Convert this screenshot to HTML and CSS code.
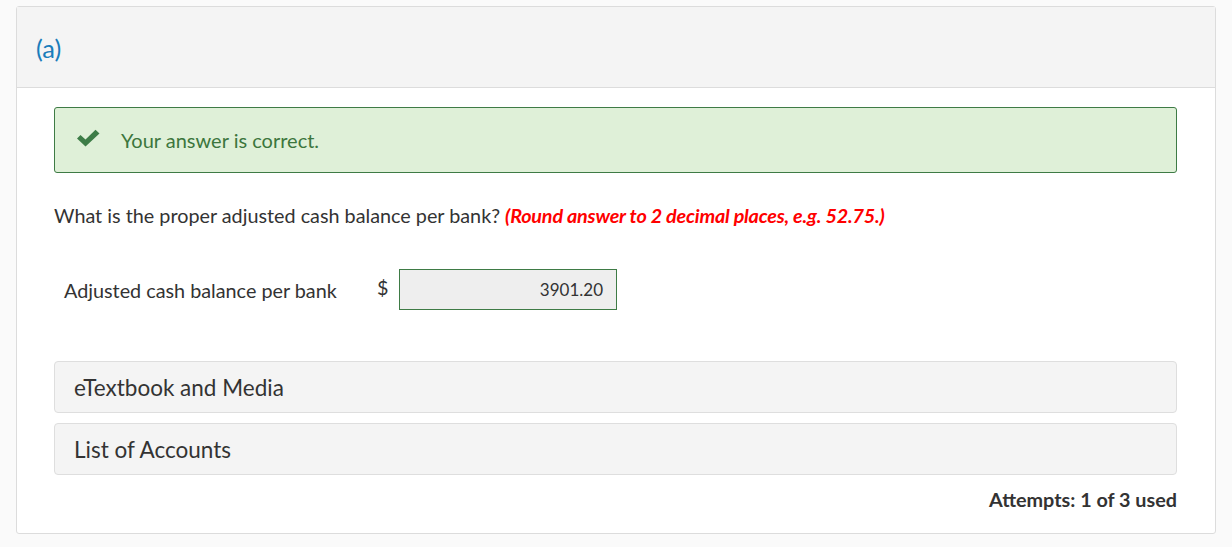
FILE: index.html
```html
<!DOCTYPE html>
<html>
<head>
<meta charset="utf-8">
<link rel="stylesheet" href="styles.css">
</head>
<body>
<div class="card">
  <div class="card-head"><span class="part">(a)</span></div>
  <div class="card-body">
    <div class="alert">
      <svg class="check" width="25" height="18" viewBox="0 0 25 18"><path d="M1 9.5 L4.5 6 L9.5 10.5 L19.5 0.8 L23.5 4.5 L9.5 17.5 Z" fill="#3d7d47"/></svg>
      <span>Your answer is correct.</span>
    </div>
    <p class="question">What is the proper adjusted cash balance per bank? <em class="hint">(Round answer to 2 decimal places, e.g. 52.75.)</em></p>
    <div class="answer-row">
      <span class="label">Adjusted cash balance per bank</span>
      <span class="dollar">$</span>
      <div class="input">3901.20</div>
    </div>
    <div class="panels">
      <div class="panel">eTextbook and Media</div>
      <div class="panel">List of Accounts</div>
    </div>
    <div class="attempts">Attempts: 1 of 3 used</div>
  </div>
</div>
</body>
</html>
```
FILE: styles.css
```css
html, body { margin: 0; padding: 0; }
body {
  background: #fafafa;
  font-family: Lato, "Open Sans", sans-serif;
  color: #333;
  padding: 6px 16px 0 16px;
}
.card {
  background: #fff;
  border: 1px solid #dcdcdc;
  border-radius: 3px;
  width: 1198px;
  height: 526px;
  box-sizing: content-box;
}
.card-head {
  background: #f4f4f4;
  border-bottom: 1px solid #dcdcdc;
  height: 80px;
  display: flex;
  align-items: center;
  padding-left: 19px;
}
.part {
  color: #1a7dbb;
  font-size: 25.5px;
  margin-top: 2px;
}
.card-body {
  padding: 19px 38px 0 37px;
}
.alert {
  background: #dff0d8;
  border: 1px solid #3e7b45;
  border-radius: 3px;
  height: 64px;
  display: flex;
  align-items: center;
  color: #3c763d;
  font-size: 20px;
}
.check { margin-left: 21px; margin-right: 20px; margin-top: -4px; }
.question {
  margin: 28px 0 0 0;
  font-size: 19.8px;
  line-height: 28px;
}
.hint {
  color: #f00;
  font-weight: bold;
  font-style: italic;
  letter-spacing: -0.2px;
}
.answer-row {
  display: flex;
  align-items: center;
  margin-top: 40px;
  padding-left: 10px;
}
.label { font-size: 19.8px; width: 313px; }
.dollar { font-size: 19.8px; width: 22px; margin-top: -6px; }
.input {
  width: 203px;
  height: 39px;
  background: #eeeeee;
  border: 1px solid #3e7b45;
  text-align: right;
  padding-right: 13px;
  line-height: 39px;
  font-size: 17px;
  color: #333;
}
.panels {
  margin-top: 51px;
  display: flex;
  flex-direction: column;
  gap: 10px;
}
.panel {
  background: #f4f4f4;
  border: 1px solid #dedede;
  border-radius: 4px;
  height: 50px;
  display: flex;
  align-items: center;
  padding-left: 19px;
  font-size: 22.5px;
  color: #333;
}
.attempts {
  text-align: right;
  font-weight: bold;
  font-size: 19.8px;
  margin-top: 12px;
}
```
